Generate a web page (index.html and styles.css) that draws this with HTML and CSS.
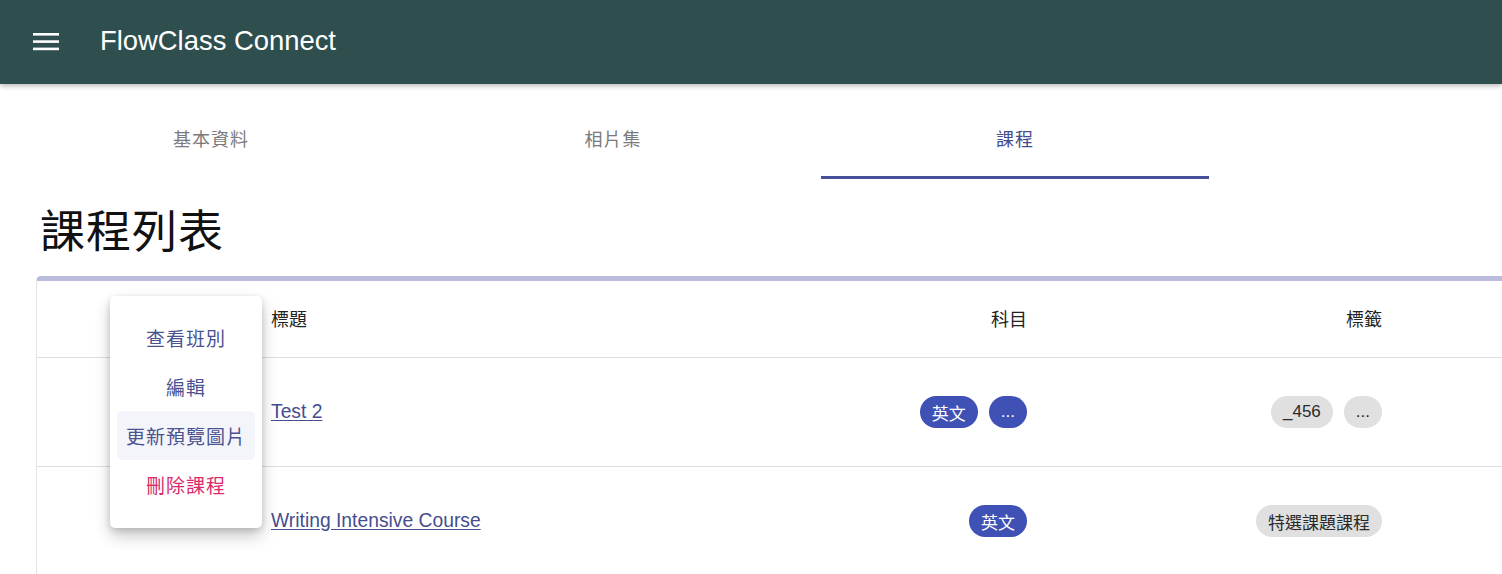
FILE: index.html
```html
<!DOCTYPE html>
<html lang="zh-Hant">
<head>
<meta charset="utf-8">
<title>FlowClass Connect</title>
<link rel="stylesheet" href="styles.css">
</head>
<body>
<header class="topbar">
  <button class="menu-btn" aria-label="menu">
    <svg width="26" height="18" viewBox="0 0 26 18"><rect x="0" y="0" width="26" height="2.6" fill="#fff"/><rect x="0" y="7.3" width="26" height="2.6" fill="#fff"/><rect x="0" y="14.6" width="26" height="2.6" fill="#fff"/></svg>
  </button>
  <div class="brand">FlowClass Connect</div>
</header>

<nav class="tabs">
  <div class="tab">基本資料</div>
  <div class="tab">相片集</div>
  <div class="tab active">課程</div>
</nav>

<h1 class="page-title">課程列表</h1>

<section class="card">
  <div class="row head">
    <div class="cell"></div>
    <div class="cell">標題</div>
    <div class="cell right">科目</div>
    <div class="cell right">標籤</div>
    <div class="cell"></div>
  </div>
  <div class="row">
    <div class="cell"></div>
    <div class="cell"><a class="link" href="#">Test 2</a></div>
    <div class="cell right"><span class="chip primary">英文</span><span class="chip primary">...</span></div>
    <div class="cell right"><span class="chip">_456</span><span class="chip">...</span></div>
    <div class="cell"></div>
  </div>
  <div class="row">
    <div class="cell"></div>
    <div class="cell"><a class="link" href="#">Writing Intensive Course</a></div>
    <div class="cell right"><span class="chip primary">英文</span></div>
    <div class="cell right"><span class="chip">特選課題課程</span></div>
    <div class="cell"></div>
  </div>

  <div class="popup">
    <div class="item">查看班別</div>
    <div class="item">編輯</div>
    <div class="item hover">更新預覽圖片</div>
    <div class="item danger">刪除課程</div>
  </div>
</section>
</body>
</html>
```

FILE: styles.css
```css
* { box-sizing: border-box; }
html, body { margin: 0; padding: 0; }
body {
  width: 1502px;
  height: 574px;
  overflow: hidden;
  background: #fff;
  font-family: "Liberation Sans", "Noto Sans CJK TC", sans-serif;
  color: #212121;
}
.topbar {
  height: 84px;
  background: #2f4f4f;
  display: flex;
  align-items: center;
  box-shadow: 0 2px 5px rgba(0,0,0,0.28);
  position: relative;
  z-index: 2;
}
.menu-btn {
  background: none;
  border: 0;
  padding: 0;
  margin-left: 33px;
  width: 26px;
  height: 18px;
  display: flex;
}
.brand {
  margin-left: 41px;
  color: #fff;
  font-size: 27.4px;
  margin-top: -3px;
}
.tabs {
  display: flex;
  margin-top: 13px;
  padding-left: 10px;
}
.tab {
  width: 402px;
  height: 82px;
  display: flex;
  align-items: center;
  justify-content: center;
  font-size: 18px;
  letter-spacing: 1px;
  color: #7a7a7a;
  position: relative;
}
.tab.active { color: #444c8c; }
.tab.active::after {
  content: "";
  position: absolute;
  left: 7px;
  right: 7px;
  bottom: 0;
  height: 3px;
  background: #46509a;
}
.page-title {
  margin: 26px 0 15px 40px;
  font-size: 45px;
  line-height: 56px;
  font-weight: 400;
  color: #111;
  letter-spacing: 1px;
}
.card {
  margin-left: 36px;
  width: 1500px;
  border-top: 5px solid #b8bbdc;
  border-left: 1px solid #e2e2e2;
  border-top-left-radius: 5px;
  position: relative;
}
.row {
  display: grid;
  grid-template-columns: 218px 569px 219px 355px 138px;
  height: 109px;
  border-bottom: 1px solid #dedede;
  align-items: center;
}
.row.head { height: 77px; padding-bottom: 3px; }
.cell {
  padding: 0 16px;
  display: flex;
  align-items: center;
  gap: 11px;
  font-size: 18px;
  color: #222;
}
.cell.right { justify-content: flex-end; }
.link {
  color: #454d8e;
  font-size: 19.3px;
  text-decoration: underline;
  text-underline-offset: 2px;
}
.chip {
  height: 32px;
  border-radius: 16px;
  padding: 0 12px;
  display: inline-flex;
  align-items: center;
  font-size: 17px;
  background: #e0e0e0;
  color: #2a2a2a;
}
.chip.primary {
  background: #3f51b5;
  color: #fff;
}
.popup {
  position: absolute;
  left: 73px;
  top: 15px;
  width: 152px;
  height: 232px;
  background: #fff;
  border-radius: 5px;
  box-shadow: 0 8px 16px rgba(0,0,0,0.22), 0 2px 6px rgba(0,0,0,0.14);
  padding: 17px 7px;
  display: flex;
  flex-direction: column;
}
.item {
  height: 49px;
  flex: none;
  display: flex;
  align-items: center;
  justify-content: center;
  font-size: 19px;
  letter-spacing: 1px;
  color: #4a5290;
  border-radius: 5px;
}
.item.hover { background: #f4f5fa; }
.item.danger { color: #d92a6c; }
```
